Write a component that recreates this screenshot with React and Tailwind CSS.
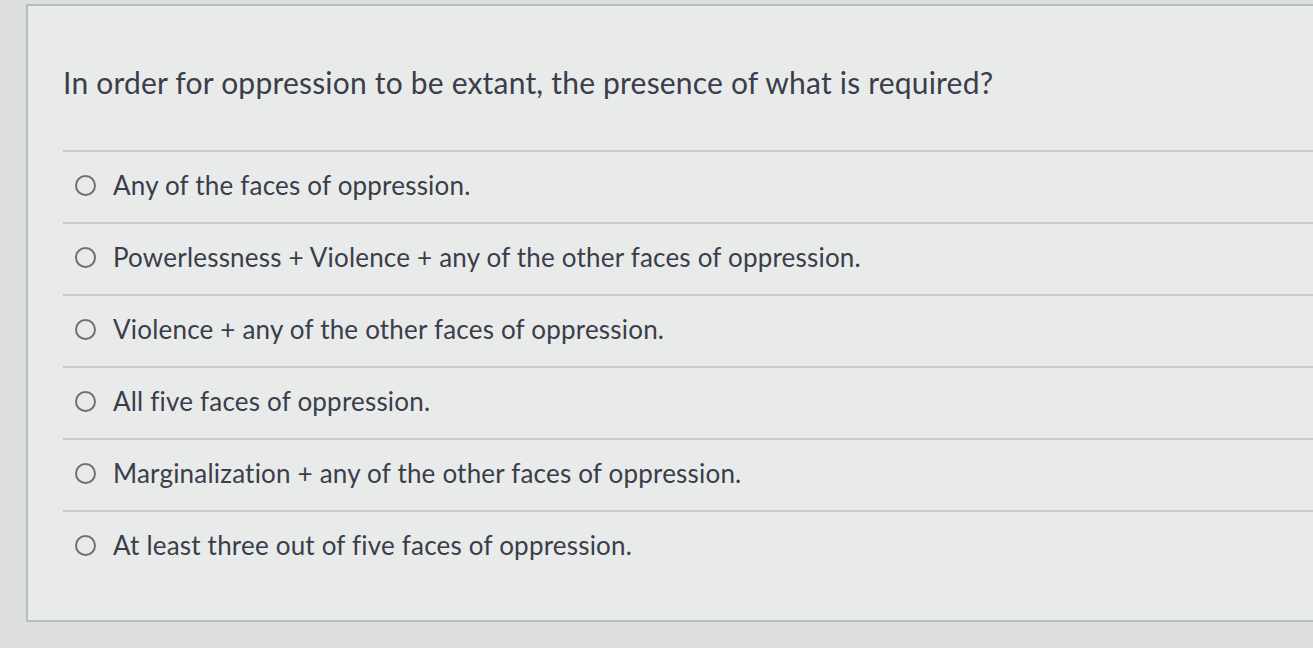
import React from 'react';

const options = [
  'Any of the faces of oppression.',
  'Powerlessness + Violence + any of the other faces of oppression.',
  'Violence + any of the other faces of oppression.',
  'All five faces of oppression.',
  'Marginalization + any of the other faces of oppression.',
  'At least three out of five faces of oppression.',
];

const Option = ({ label }) => (
  <div className="flex items-center h-[72px] border-t-2 border-[#c9cbcc] pl-[12px] pb-[4px]">
    <span className="block w-[21px] h-[21px] rounded-full border-[2.5px] border-[#6f7177] shrink-0" />
    <span className="ml-[17px] text-[26px] text-[#3b3d4a] tracking-[0.2px]">{label}</span>
  </div>
);

export default function App() {
  return (
    <div className="w-[1313px] h-[648px] bg-[#dcdfde] overflow-hidden pt-[4px] pl-[26px]" style={{ fontFamily: 'Lato, "Open Sans", sans-serif' }}>
      <div className="h-[618px] bg-[#e8ebea] border-l-2 border-t-2 border-b-2 border-[#b9bcbd] pl-[35px]">
        <h1 className="text-[30px] text-[#3b3d4a] pt-[56px] leading-[40px] tracking-[0.2px]">
          In order for oppression to be extant, the presence of what is required?
        </h1>
        <div className="mt-[48px]">
          {options.map((o) => (
            <Option key={o} label={o} />
          ))}
        </div>
      </div>
    </div>
  );
}
